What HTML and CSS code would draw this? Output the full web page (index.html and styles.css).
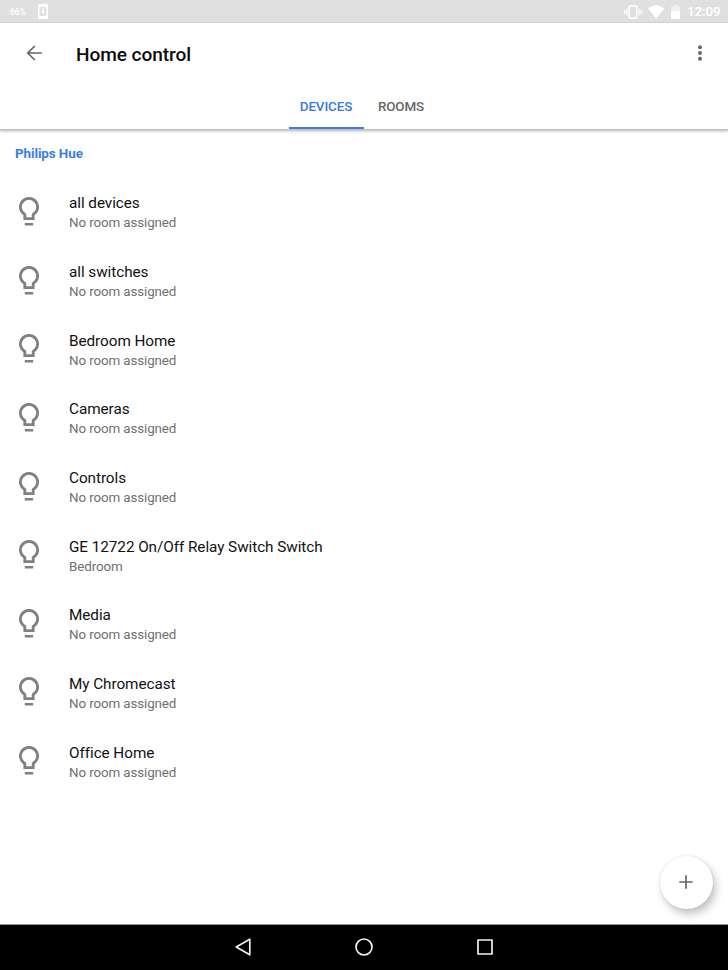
FILE: index.html
```html
<!DOCTYPE html>
<html lang="en">
<head>
<meta charset="utf-8">
<title>Home control</title>
<link rel="stylesheet" href="styles.css">
</head>
<body>
<svg class="defs" width="0" height="0" aria-hidden="true">
  <symbol id="bulb" viewBox="0 0 20 29">
    <path d="M5.8 21.6V17.5A8.6 8.6 0 1 1 14.2 17.5V21.6Z" fill="none" stroke="#808080" stroke-width="2.8"/>
    <path d="M5.8 26h8.4v2.5H5.8z" fill="#808080"/>
  </symbol>
</svg>
<div class="screen">
  <div class="status">
    <span class="percent">66%</span>
    <svg class="download" width="10" height="15" viewBox="0 0 10 15"><rect width="10" height="15" rx="1.2" fill="#fff"/><path d="M1.6 3h6.8v9H1.6z" fill="#e0e0e0"/><path d="M4.3 4.3h1.4v3.2h1.7L5 10.1 2.6 7.5h1.7z" fill="#fff"/></svg>
    <span class="spacer"></span>
    <svg class="vibrate" width="18" height="14" viewBox="0 0 18 14" fill="none" stroke="#fff"><rect x="5.2" y="1" width="7.6" height="12" rx=".8" stroke-width="1.5"/><path d="M.8 5v4M17.2 5v4M3 3.4v7.2M15 3.4v7.2" stroke-width="1.3"/></svg>
    <svg class="wifi" width="17" height="14" viewBox="0 0 17 14"><path d="M0 3.4Q8.2-2.8 16.4 3.4L8.2 13.6Z" fill="#fff"/></svg>
    <svg class="battery" width="9" height="14" viewBox="0 0 9 14"><path d="M0 1.6h2.6V0h3.8v1.6H9V6H0z" fill="#f0f0f0"/><path d="M0 6h9v7.2q0 .8-.8.8H.8q-.8 0-.8-.8z" fill="#fff"/></svg>
    <span class="clock">12:09</span>
  </div>
  <header>
    <div class="toolbar">
      <svg class="back" width="16" height="16" viewBox="0 0 16 16" fill="none" stroke="#666" stroke-width="1.7"><path d="M15.8 8H1.6M8.8 1 1.8 8l7 7"/></svg>
      <h1>Home control</h1>
      <svg class="more" width="4" height="16" viewBox="0 0 4 16" fill="#666"><circle cx="2" cy="2.2" r="1.95"/><circle cx="2" cy="8" r="1.95"/><circle cx="2" cy="13.8" r="1.95"/></svg>
    </div>
    <nav class="tabs"><span class="tab active"><span class="label">DEVICES</span></span><span class="tab"><span class="label">ROOMS</span></span></nav>
  </header>
  <main>
    <h2><span class="label">Philips Hue</span></h2>
    <ul>
      <li><svg class="bulb"><use href="#bulb"/></svg><div><p class="name"><span>all devices</span></p><p class="room"><span>No room assigned</span></p></div></li>
      <li><svg class="bulb"><use href="#bulb"/></svg><div><p class="name"><span>all switches</span></p><p class="room"><span>No room assigned</span></p></div></li>
      <li><svg class="bulb"><use href="#bulb"/></svg><div><p class="name"><span>Bedroom Home</span></p><p class="room"><span>No room assigned</span></p></div></li>
      <li><svg class="bulb"><use href="#bulb"/></svg><div><p class="name"><span>Cameras</span></p><p class="room"><span>No room assigned</span></p></div></li>
      <li><svg class="bulb"><use href="#bulb"/></svg><div><p class="name"><span>Controls</span></p><p class="room"><span>No room assigned</span></p></div></li>
      <li><svg class="bulb"><use href="#bulb"/></svg><div><p class="name"><span>GE 12722 On/Off Relay Switch Switch</span></p><p class="room"><span>Bedroom</span></p></div></li>
      <li><svg class="bulb"><use href="#bulb"/></svg><div><p class="name"><span>Media</span></p><p class="room"><span>No room assigned</span></p></div></li>
      <li><svg class="bulb"><use href="#bulb"/></svg><div><p class="name"><span>My Chromecast</span></p><p class="room"><span>No room assigned</span></p></div></li>
      <li><svg class="bulb"><use href="#bulb"/></svg><div><p class="name"><span>Office Home</span></p><p class="room"><span>No room assigned</span></p></div></li>
    </ul>
  </main>
  <button class="fab" aria-label="Add"><svg width="14" height="14" viewBox="0 0 14 14" stroke="#666" stroke-width="1.7"><path d="M7 .3v13.4M.3 7h13.4"/></svg></button>
  <footer>
    <svg width="16" height="18" viewBox="0 0 16 18" fill="none" stroke="#f2f2f2" stroke-width="1.7" stroke-linejoin="round"><path d="M14.8 1.2v15.6L1.2 9z"/></svg>
    <svg width="18" height="18" viewBox="0 0 18 18" fill="none" stroke="#f2f2f2" stroke-width="1.7"><circle cx="9" cy="9" r="8"/></svg>
    <svg width="16" height="16" viewBox="0 0 16 16" fill="none" stroke="#f2f2f2" stroke-width="1.7" stroke-linejoin="round"><path d="M1 1h14v14H1z"/></svg>
  </footer>
</div>
</body>
</html>
```
FILE: styles.css
```css
* { box-sizing: border-box; margin: 0; padding: 0; }
body { background: #fff; font-family: Roboto, "Liberation Sans", sans-serif; }
svg { display: block; flex: none; }
.defs { position: absolute; }
.screen { position: relative; width: 728px; height: 970px; display: flex; flex-direction: column; overflow: hidden; }
.status { height: 23px; flex: none; display: flex; align-items: center; background: #e0e0e0; color: #fff; padding: 0 8px 0 10px; }
.percent { width: 28px; font-size: 8.5px; font-weight: 500; line-height: 22px; }
.spacer { flex: 1; }
.vibrate { margin-right: 6px; }
.wifi { margin-right: 6px; }
.battery { margin-right: 7px; }
.clock { font-size: 13.4px; font-weight: 500; line-height: 24px; width: 33px; letter-spacing: -0.1px; white-space: nowrap; }
header { height: 107px; flex: none; border-bottom: 1px solid #bdbdbd; box-shadow: 0 1px 3px rgba(0,0,0,.3); }
.toolbar { height: 60px; display: flex; align-items: center; padding: 0 26px; }
h1 { flex: 1; margin-left: 34px; padding-top: 3px; font-size: 19.1px; line-height: 24px; font-weight: 500; letter-spacing: -0.08px; color: #0c0c0c; }
.more { margin-right: .5px; }
.tabs { height: 46px; display: flex; justify-content: center; padding-right: 1px; }
.tab { width: 75px; height: 46px; line-height: 48px; text-align: center; font-size: 13.4px; font-weight: 500; letter-spacing: -0.1px; color: #666; }
.active { color: #3578e5; border-bottom: 2px solid #3c7ce8; }
main { flex: 1; padding: 0 15px; }
h2 { height: 47px; line-height: 47px; font-size: 13.4px; font-weight: 700; letter-spacing: -0.08px; color: #3b7deb; }
li { list-style: none; height: 68.65px; display: flex; padding: 16px 0 0 4px; }
.bulb { width: 20px; height: 29px; margin: 4px 30px 0 0; }
.name { padding-top: .4px; font-size: 15.3px; line-height: 20px; letter-spacing: -0.06px; color: #111; }
.room { font-size: 13.4px; line-height: 19.2px; letter-spacing: -0.12px; color: #707070; }
.fab { position: absolute; left: 660px; top: 856px; width: 53px; height: 53px; border: 0; border-radius: 50%; background: #fff; display: flex; align-items: center; justify-content: center; padding: 0 1px 1px 0; box-shadow: 3px 5px 9px rgba(0,0,0,.24), 0 0 2px rgba(0,0,0,.14); }
footer { height: 46px; flex: none; border-top: 1px solid #999; background: #000; display: flex; align-items: center; justify-content: center; gap: 104px; padding-bottom: 1px; }
```
